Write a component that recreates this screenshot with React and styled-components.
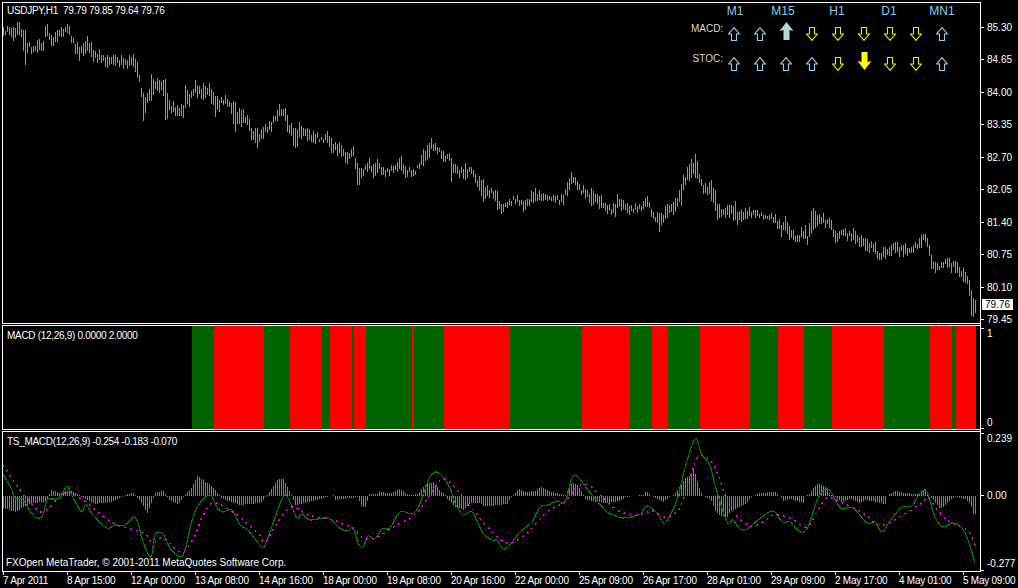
import styled, {createGlobalStyle} from 'styled-components';

const GlobalStyle = createGlobalStyle`
  html, body {
    margin: 0;
    background: #000;
  }
`;

// [x, high y, low y] read off the chart, screen pixels
const priceKeys = [
  [3, 27, 35], [9, 27, 34], [13, 27, 40], [19, 22, 34], [23, 30, 50], [25, 30, 64], [28, 42, 50], [32, 46, 52],
  [37, 40, 52], [43, 41, 50], [45, 26, 36], [47, 24, 35], [51, 35, 45], [57, 30, 41], [67, 24, 32], [72, 35, 44],
  [79, 47, 60], [87, 36, 50], [92, 46, 61], [100, 52, 62], [107, 55, 67], [115, 55, 65], [123, 58, 68],
  [133, 54, 66], [137, 62, 77], [140, 80, 88], [143, 93, 120], [147, 93, 102], [151, 74, 100], [157, 78, 90],
  [163, 80, 95], [165, 79, 119], [170, 102, 113], [177, 105, 115], [183, 105, 117], [185, 85, 107], [190, 93, 103],
  [195, 80, 92], [202, 85, 102], [209, 83, 95], [215, 96, 116], [220, 97, 106], [228, 97, 105], [235, 102, 131],
  [243, 109, 122], [249, 119, 130], [251, 128, 139], [257, 128, 147], [263, 127, 138], [270, 120, 130],
  [277, 110, 120], [279, 104, 115], [285, 108, 120], [287, 115, 131], [295, 128, 147], [297, 129, 146],
  [299, 122, 136], [307, 128, 140], [313, 131, 142], [322, 138, 140], [327, 131, 142], [331, 138, 152],
  [341, 145, 156], [347, 152, 163], [353, 146, 155], [357, 163, 184], [359, 168, 184], [363, 169, 175],
  [369, 158, 168], [373, 164, 177], [377, 159, 172], [385, 170, 176], [393, 166, 172], [401, 156, 170],
  [405, 166, 177], [413, 169, 175], [419, 163, 168], [423, 149, 165], [429, 143, 157], [431, 138, 148],
  [437, 147, 153], [443, 151, 161], [449, 153, 160], [451, 158, 181], [455, 164, 172], [459, 170, 177],
  [465, 163, 179], [471, 167, 173], [475, 174, 182], [483, 179, 201], [487, 185, 195], [495, 190, 200],
  [497, 191, 209], [501, 204, 213], [507, 202, 207], [517, 195, 201], [523, 201, 211], [535, 188, 200],
  [543, 193, 200], [553, 195, 200], [563, 195, 204], [567, 182, 195], [571, 172, 183], [577, 181, 189],
  [585, 189, 198], [591, 188, 205], [601, 195, 207], [605, 203, 210], [615, 204, 216], [617, 194, 207],
  [627, 203, 212], [637, 206, 212], [647, 196, 206], [653, 212, 218], [659, 213, 231], [667, 204, 217],
  [675, 198, 211], [681, 184, 205], [683, 175, 189], [691, 159, 177], [695, 154, 177], [703, 185, 193],
  [711, 180, 200], [715, 190, 210], [717, 204, 219], [725, 208, 217], [729, 205, 217], [735, 201, 219],
  [737, 212, 224], [745, 208, 218], [755, 210, 217], [765, 215, 218], [775, 214, 222], [781, 225, 236],
  [785, 216, 230], [789, 226, 239], [797, 235, 241], [805, 225, 238], [807, 236, 244], [811, 211, 233],
  [813, 208, 229], [819, 214, 223], [829, 218, 227], [835, 231, 242], [843, 229, 235], [855, 231, 243],
  [865, 238, 250], [875, 242, 253], [879, 253, 259], [885, 247, 258], [895, 242, 252], [903, 245, 256],
  [913, 245, 252], [921, 235, 247], [925, 234, 241], [929, 245, 255], [931, 255, 268], [935, 262, 272],
  [943, 262, 267], [947, 258, 267], [955, 261, 272], [963, 268, 281], [967, 276, 283], [969, 280, 295],
  [971, 290, 315], [973, 298, 316], [975, 300, 312],
];

// [x, height above (+) or below (-) the zero line]
const histKeys = [
  [3, -12], [15, -16], [25, -10], [33, -7], [43, -6], [48, -3], [50, 6], [60, 3], [70, 6], [80, 0], [95, -8], [110, -6],
  [125, 1], [133, 3], [140, -5], [147, -17], [155, 3], [163, 5], [170, -5], [178, -8], [185, 2], [190, 6], [197, 20],
  [210, 11], [215, 6], [222, -3], [240, -9], [260, -7], [267, 1], [278, 17], [283, 17], [290, 3], [295, -9], [320, -3],
  [333, 1], [335, -4], [343, -3], [358, -1], [360, -10], [365, -11], [368, -2], [369, 2], [377, 2], [379, 4], [390, 3],
  [400, 7], [405, 3], [410, 1], [417, 2], [425, 11], [433, 14], [440, 5], [445, 1], [447, -3], [455, -11], [463, -14],
  [470, -7], [480, -7], [483, -10], [490, -10], [507, -8], [510, -2], [513, 1], [518, 7], [525, 4], [535, 5], [540, 9],
  [546, 6], [555, 3], [565, 1], [568, 7], [572, 13], [577, 11], [582, 3], [585, -3], [595, -6], [608, -7], [620, -5],
  [625, -1], [643, 1], [646, 5], [650, 1], [653, -1], [663, -6], [668, -2], [672, 0], [675, 3], [680, 10], [685, 18],
  [690, 21], [693, 28], [697, 15], [700, 5], [703, 0], [710, -3], [715, -15], [720, -20], [727, -21], [730, -15],
  [737, -12], [745, -8], [750, -2], [755, 1], [758, 3], [775, 4], [778, 1], [780, -1], [783, -5], [790, -3], [803, -7],
  [805, 0], [809, 2], [812, 7], [818, 13], [825, 9], [830, 2], [835, -1], [841, -6], [850, -3], [860, -7], [866, -4],
  [880, -7], [885, -8], [887, 0], [888, 2], [895, 5], [905, 3], [915, 2], [920, 3], [925, 7], [928, 1], [932, -3],
  [940, -13], [945, -9], [950, -4], [955, -1], [965, -3], [970, -8], [973, -18], [975, -18],
];

const macdLine = `3,474 7,481 12,490 15,498 22,499 26,504 30,511 35,517 40,518 43,515 47,500 52,499 60,498 67,486 72,496
  77,505 82,512 85,505 88,507 93,515 107,528 115,525 125,525 134,517 138,523 143,542 151,557 155,535 163,534 170,548
  180,557 185,550 193,517 200,503 210,495 217,507 223,512 232,510 240,525 248,530 262,547 267,540 283,497 290,502
  297,518 302,514 310,520 328,518 338,527 347,531 353,528 358,543 363,547 368,536 375,539 382,529 390,528 400,512
  412,514 418,508 423,495 430,477 436,472 443,477 450,488 455,503 463,515 467,513 473,513 483,533 492,540 497,540
  502,548 508,547 520,532 532,522 540,507 548,505 557,501 565,502 572,478 578,477 588,490 598,502 607,512 613,515
  623,518 640,514 647,506 657,513 662,521 666,522 677,500 685,468 695,439 702,455 710,465 715,485 727,522 733,520
  740,529 747,529 758,520 773,511 782,522 790,522 800,532 808,527 818,498 828,489 837,503 842,509 853,508 867,523
  875,522 882,532 890,521 902,507 912,506 920,493 927,492 935,517 943,527 952,523 962,528 968,540 975,563`;

const signalLine = `3,465 20,490 30,502 42,512 57,500 68,492 87,503 113,523 143,533 153,543 163,538 182,552 195,535 202,518
  213,503 233,512 257,532 265,542 277,523 292,507 308,515 333,520 340,523 353,528 363,538 375,538 397,525 415,515
  428,498 440,481 447,480 457,490 473,510 493,533 508,543 525,535 547,512 565,502 577,487 588,485 600,495 617,510
  633,515 643,514 653,511 665,517 677,512 683,500 692,472 698,457 708,458 717,472 725,495 733,512 750,526 763,522
  775,515 792,519 807,527 817,512 827,498 843,503 863,513 880,525 898,518 922,503 928,498 940,513 950,522 967,530
  975,545`;

const lerpKeys = (keys, x, i) => {
  let a = keys[0];
  let b = keys[keys.length - 1];
  for (let k = 0; k < keys.length - 1; k++) {
    if (x >= keys[k][0] && x <= keys[k + 1][0]) {
      a = keys[k];
      b = keys[k + 1];
      break;
    }
  }
  const t = b[0] === a[0] ? 0 : (x - a[0]) / (b[0] - a[0]);
  return a[i] + (b[i] - a[i]) * t;
};

// catmull-rom through the traced points, so the peaks stay where they were read
const smoothPath = (points) => {
  const pts = points.trim().split(/\s+/).map((p) => p.split(',').map(Number));
  let d = `M${pts[0][0]} ${pts[0][1]}`;
  for (let i = 0; i < pts.length - 1; i++) {
    const p0 = pts[i - 1] || pts[i];
    const p1 = pts[i];
    const p2 = pts[i + 1];
    const p3 = pts[i + 2] || p2;
    const c1x = p1[0] + (p2[0] - p0[0]) / 6;
    const c1y = p1[1] + (p2[1] - p0[1]) / 6;
    const c2x = p2[0] - (p3[0] - p1[0]) / 6;
    const c2y = p2[1] - (p3[1] - p1[1]) / 6;
    d += `C${c1x} ${c1y} ${c2x} ${c2y} ${p2[0]} ${p2[1]}`;
  }
  return d;
};

const oddColumns = [];
for (let x = 3; x <= 975; x += 2) oddColumns.push(x);

const keyXs = new Set(priceKeys.map((k) => k[0]));

const pricePath = oddColumns
  .map((x) => {
    const high = lerpKeys(priceKeys, x, 1);
    const low = lerpKeys(priceKeys, x, 2);
    if (keyXs.has(x)) return `M${x + 0.5} ${high}V${low + 1}`;
    const mid = (high + low) / 2 + Math.sin(x * 1.7) * 2 + Math.sin(x * 0.61);
    const half = ((low - high) / 2) * (0.7 + 0.25 * Math.sin(x * 2.3));
    return `M${x + 0.5} ${Math.round(mid - half)}V${Math.round(mid + half) + 1}`;
  })
  .join('');

const histPath = oddColumns
  .map((x) => {
    const h = Math.round(lerpKeys(histKeys, x, 1));
    return `M${x + 0.5} 496V${496 - h}`;
  })
  .join('');

const macdSegments = [
  ['#006400', 22], ['#ff0000', 50], ['#006400', 26], ['#ff0000', 32], ['#006400', 8], ['#ff0000', 22], ['#006400', 2],
  ['#ff0000', 12], ['#006400', 46], ['#ff0000', 2], ['#006400', 30], ['#ff0000', 66], ['#006400', 72], ['#ff0000', 48],
  ['#006400', 22], ['#ff0000', 16], ['#006400', 32], ['#ff0000', 50], ['#006400', 28], ['#ff0000', 26], ['#006400', 28],
  ['#ff0000', 52], ['#006400', 46], ['#ff0000', 22], ['#006400', 4], ['#ff0000', 20],
];

const timeLabels = [
  '7 Apr 2011', '8 Apr 15:00', '12 Apr 00:00', '13 Apr 08:00', '14 Apr 16:00', '18 Apr 00:00', '19 Apr 08:00',
  '20 Apr 16:00', '22 Apr 00:00', '25 Apr 09:00', '26 Apr 17:00', '28 Apr 01:00', '29 Apr 09:00', '2 May 17:00',
  '4 May 01:00', '5 May 09:00',
];

const priceLabels = ['85.30', '84.65', '84.00', '83.35', '82.70', '82.05', '81.40', '80.75', '80.10', '79.45'];

const timeframes = [
  ['M1', 48], ['M15', 48], ['H1', 60], ['D1', 44], ['MN1', 62],
];

const macdSignals = ['up', 'up', 'UP', 'down', 'down', 'down', 'down', 'down', 'up'];
const stocSignals = ['up', 'up', 'up', 'up', 'down', 'DOWN', 'down', 'down', 'up'];

const Terminal = styled.div`
  display: flex;
  flex-direction: column;
  width: 1018px;
  height: 588px;
  padding: 2px 0 0 2px;
  box-sizing: border-box;
  background: #000;
  color: #fff;
  font-family: 'Liberation Sans', Arial, sans-serif;
  overflow: hidden;
`;
const ChartArea = styled.div`
  display: flex;
`;
const PanelStack = styled.div`
  display: flex;
  flex-direction: column;
  gap: 1px;
  width: 978px;
  box-sizing: content-box;
  border-right: 1px solid #fff;
`;
const Panel = styled.div`
  position: relative;
  height: ${(p) => p.$height}px;
  box-sizing: border-box;
  border: 1px solid #fff;
  border-right: 0;
  overflow: hidden;
`;
const ChartSvg = styled.svg`
  display: block;
`;
const Legend = styled.div`
  position: absolute;
  left: 4px;
  top: ${(p) => p.$top}px;
  font-size: 10px;
  line-height: 12px;
  letter-spacing: -0.3px;
  white-space: pre;
`;
const Symbol = styled.span`
  margin-right: 5px;
`;
const Copyright = styled.div`
  position: absolute;
  left: 3px;
  bottom: 2px;
  font-size: 10px;
  line-height: 13px;
  white-space: nowrap;
`;
const SegmentRow = styled.div`
  display: flex;
  height: 100%;
  padding-left: 189px;
`;
const Segment = styled.div`
  flex: none;
  width: ${(p) => p.$width}px;
  background: ${(p) => p.$color};
`;
const AxisColumn = styled.div`
  display: flex;
  flex-direction: column;
  gap: 1px;
  flex: 1;
`;
const AxisBlock = styled.div`
  position: relative;
  height: ${(p) => p.$height}px;
  padding-top: ${(p) => p.$top}px;
  box-sizing: border-box;
`;
const AxisTick = styled.div`
  display: flex;
  align-items: flex-start;
  height: ${(p) => p.$height}px;
  font-size: 10px;
  line-height: 12px;
`;
const TickMark = styled.span`
  flex: none;
  width: 3px;
  height: 1px;
  margin: ${(p) => 5 + (p.$offset || 0)}px 3px 0 0;
  background: #fff;
`;
const PriceTag = styled.div`
  position: absolute;
  left: 1px;
  top: 297px;
  width: 31px;
  height: 11px;
  padding-left: 3px;
  box-sizing: border-box;
  background: #fff;
  color: #000;
  font-size: 10px;
  line-height: 11px;
`;
const TimeAxis = styled.div`
  display: flex;
  padding-left: 1px;
`;
const TimeCell = styled.div`
  flex: none;
  width: 64px;
  height: 16px;
  font-size: 10px;
  line-height: 12px;
  letter-spacing: -0.25px;
  white-space: nowrap;
`;
const TimeTick = styled.div`
  width: 1px;
  height: 3px;
  background: #fff;
`;
const Signals = styled.div`
  position: absolute;
  left: 688px;
  top: 2px;
  display: flex;
  flex-direction: column;
`;
const FrameRow = styled.div`
  display: flex;
  height: 13px;
  padding-left: 20px;
  margin-bottom: 4px;
`;
const FrameName = styled.div`
  width: ${(p) => p.$width}px;
  text-align: center;
  font-size: 12px;
  line-height: 13px;
  color: #87ceeb;
`;
const SignalRow = styled.div`
  display: flex;
  align-items: flex-end;
  height: 19px;
  margin-bottom: 11px;
`;
const SignalName = styled.div`
  align-self: flex-start;
  width: 32px;
  margin-top: 1px;
  margin-right: -2px;
  text-align: right;
  font-size: 10px;
  line-height: 12px;
  color: #d6d6d6;
`;
const ArrowCell = styled.div`
  display: flex;
  justify-content: center;
  align-items: flex-end;
  flex: none;
  width: 26px;
  height: 19px;
`;
const HollowArrow = styled.svg`
  display: block;
  transform: ${(p) => (p.$down ? 'rotate(180deg)' : 'none')};
`;
const SolidArrow = styled.svg`
  display: block;
  margin-bottom: 1px;
  transform: ${(p) => (p.$down ? 'rotate(180deg)' : 'none')};
`;

const SignalArrow = ({kind}) => {
  const down = kind.toLowerCase() === 'down';
  if (kind === 'UP' || kind === 'DOWN') {
    return (
      <SolidArrow $down={down} width="15" height="18" viewBox="0 0 15 18">
        <path d="M7.5 0L14.5 9L10.5 8V18H4.5V8L.5 9Z" fill={down ? '#ffff00' : '#add8e6'} />
      </SolidArrow>
    );
  }
  return (
    <HollowArrow $down={down} width="12" height="14" viewBox="0 0 12 14">
      <path
        d="M6 .6L11.4 7H8.5V13.5H3.5V7H.6Z"
        fill="none"
        stroke={down ? '#e8e800' : '#8fd4f0'}
        strokeWidth="1.1"
      />
    </HollowArrow>
  );
};

const SignalLine = ({name, signals}) => {
  return (
    <SignalRow>
      <SignalName>{name}</SignalName>
      {signals.map((kind, i) => (
        <ArrowCell key={i}>
          <SignalArrow kind={kind} />
        </ArrowCell>
      ))}
    </SignalRow>
  );
};

const App = () => {
  return (
    <Terminal>
      <GlobalStyle />
      <ChartArea>
        <PanelStack>
          <Panel $height={322}>
            <ChartSvg width="977" height="320" viewBox="3 3 977 320" shapeRendering="crispEdges">
              <path d={pricePath} stroke="#2fe01a" strokeWidth="1" fill="none" />
            </ChartSvg>
            <Legend $top={2}>
              <Symbol>USDJPY,H1</Symbol>79.79 79.85 79.64 79.76
            </Legend>
            <Signals>
              <FrameRow>
                {timeframes.map(([name, width]) => (
                  <FrameName key={name} $width={width}>{name}</FrameName>
                ))}
              </FrameRow>
              <SignalLine name="MACD:" signals={macdSignals} />
              <SignalLine name="STOC:" signals={stocSignals} />
            </Signals>
          </Panel>
          <Panel $height={105}>
            <SegmentRow>
              {macdSegments.map(([color, width], i) => (
                <Segment key={i} $color={color} $width={width} />
              ))}
            </SegmentRow>
            <Legend $top={4}>MACD (12,26,9) 0.0000 2.0000</Legend>
          </Panel>
          <Panel $height={141}>
            <ChartSvg width="977" height="139" viewBox="3 432 977 139" shapeRendering="crispEdges">
              <path d={histPath} stroke="#808080" strokeWidth="1" fill="none" />
              <path d={smoothPath(macdLine)} stroke="#008000" strokeWidth="1.2" fill="none" />
              <path d={smoothPath(signalLine)} stroke="#ff00ff" strokeWidth="1.4" strokeDasharray="2 4" fill="none" />
            </ChartSvg>
            <Legend $top={4}>TS_MACD(12,26,9) -0.254 -0.183 -0.070</Legend>
            <Copyright>FXOpen MetaTrader, © 2001-2011 MetaQuotes Software Corp.</Copyright>
          </Panel>
        </PanelStack>
        <AxisColumn>
          <AxisBlock $height={322} $top={20}>
            {priceLabels.map((label) => (
              <AxisTick key={label} $height={32.44}>
                <TickMark />
                {label}
              </AxisTick>
            ))}
            <PriceTag>79.76</PriceTag>
          </AxisBlock>
          <AxisBlock $height={105} $top={3}>
            <AxisTick $height={89}>
              <TickMark $offset={-5} />1
            </AxisTick>
            <AxisTick $height={12}>
              <TickMark $offset={6} />0
            </AxisTick>
          </AxisBlock>
          <AxisBlock $height={141} $top={2}>
            <AxisTick $height={56.5}>
              <TickMark $offset={-5} />0.239
            </AxisTick>
            <AxisTick $height={68.5}>
              <TickMark />0.00
            </AxisTick>
            <AxisTick $height={12}>
              <TickMark $offset={7} />-0.277
            </AxisTick>
          </AxisBlock>
        </AxisColumn>
      </ChartArea>
      <TimeAxis>
        {timeLabels.map((label) => (
          <TimeCell key={label}>
            <TimeTick />
            {label}
          </TimeCell>
        ))}
      </TimeAxis>
    </Terminal>
  );
};

export default App;
